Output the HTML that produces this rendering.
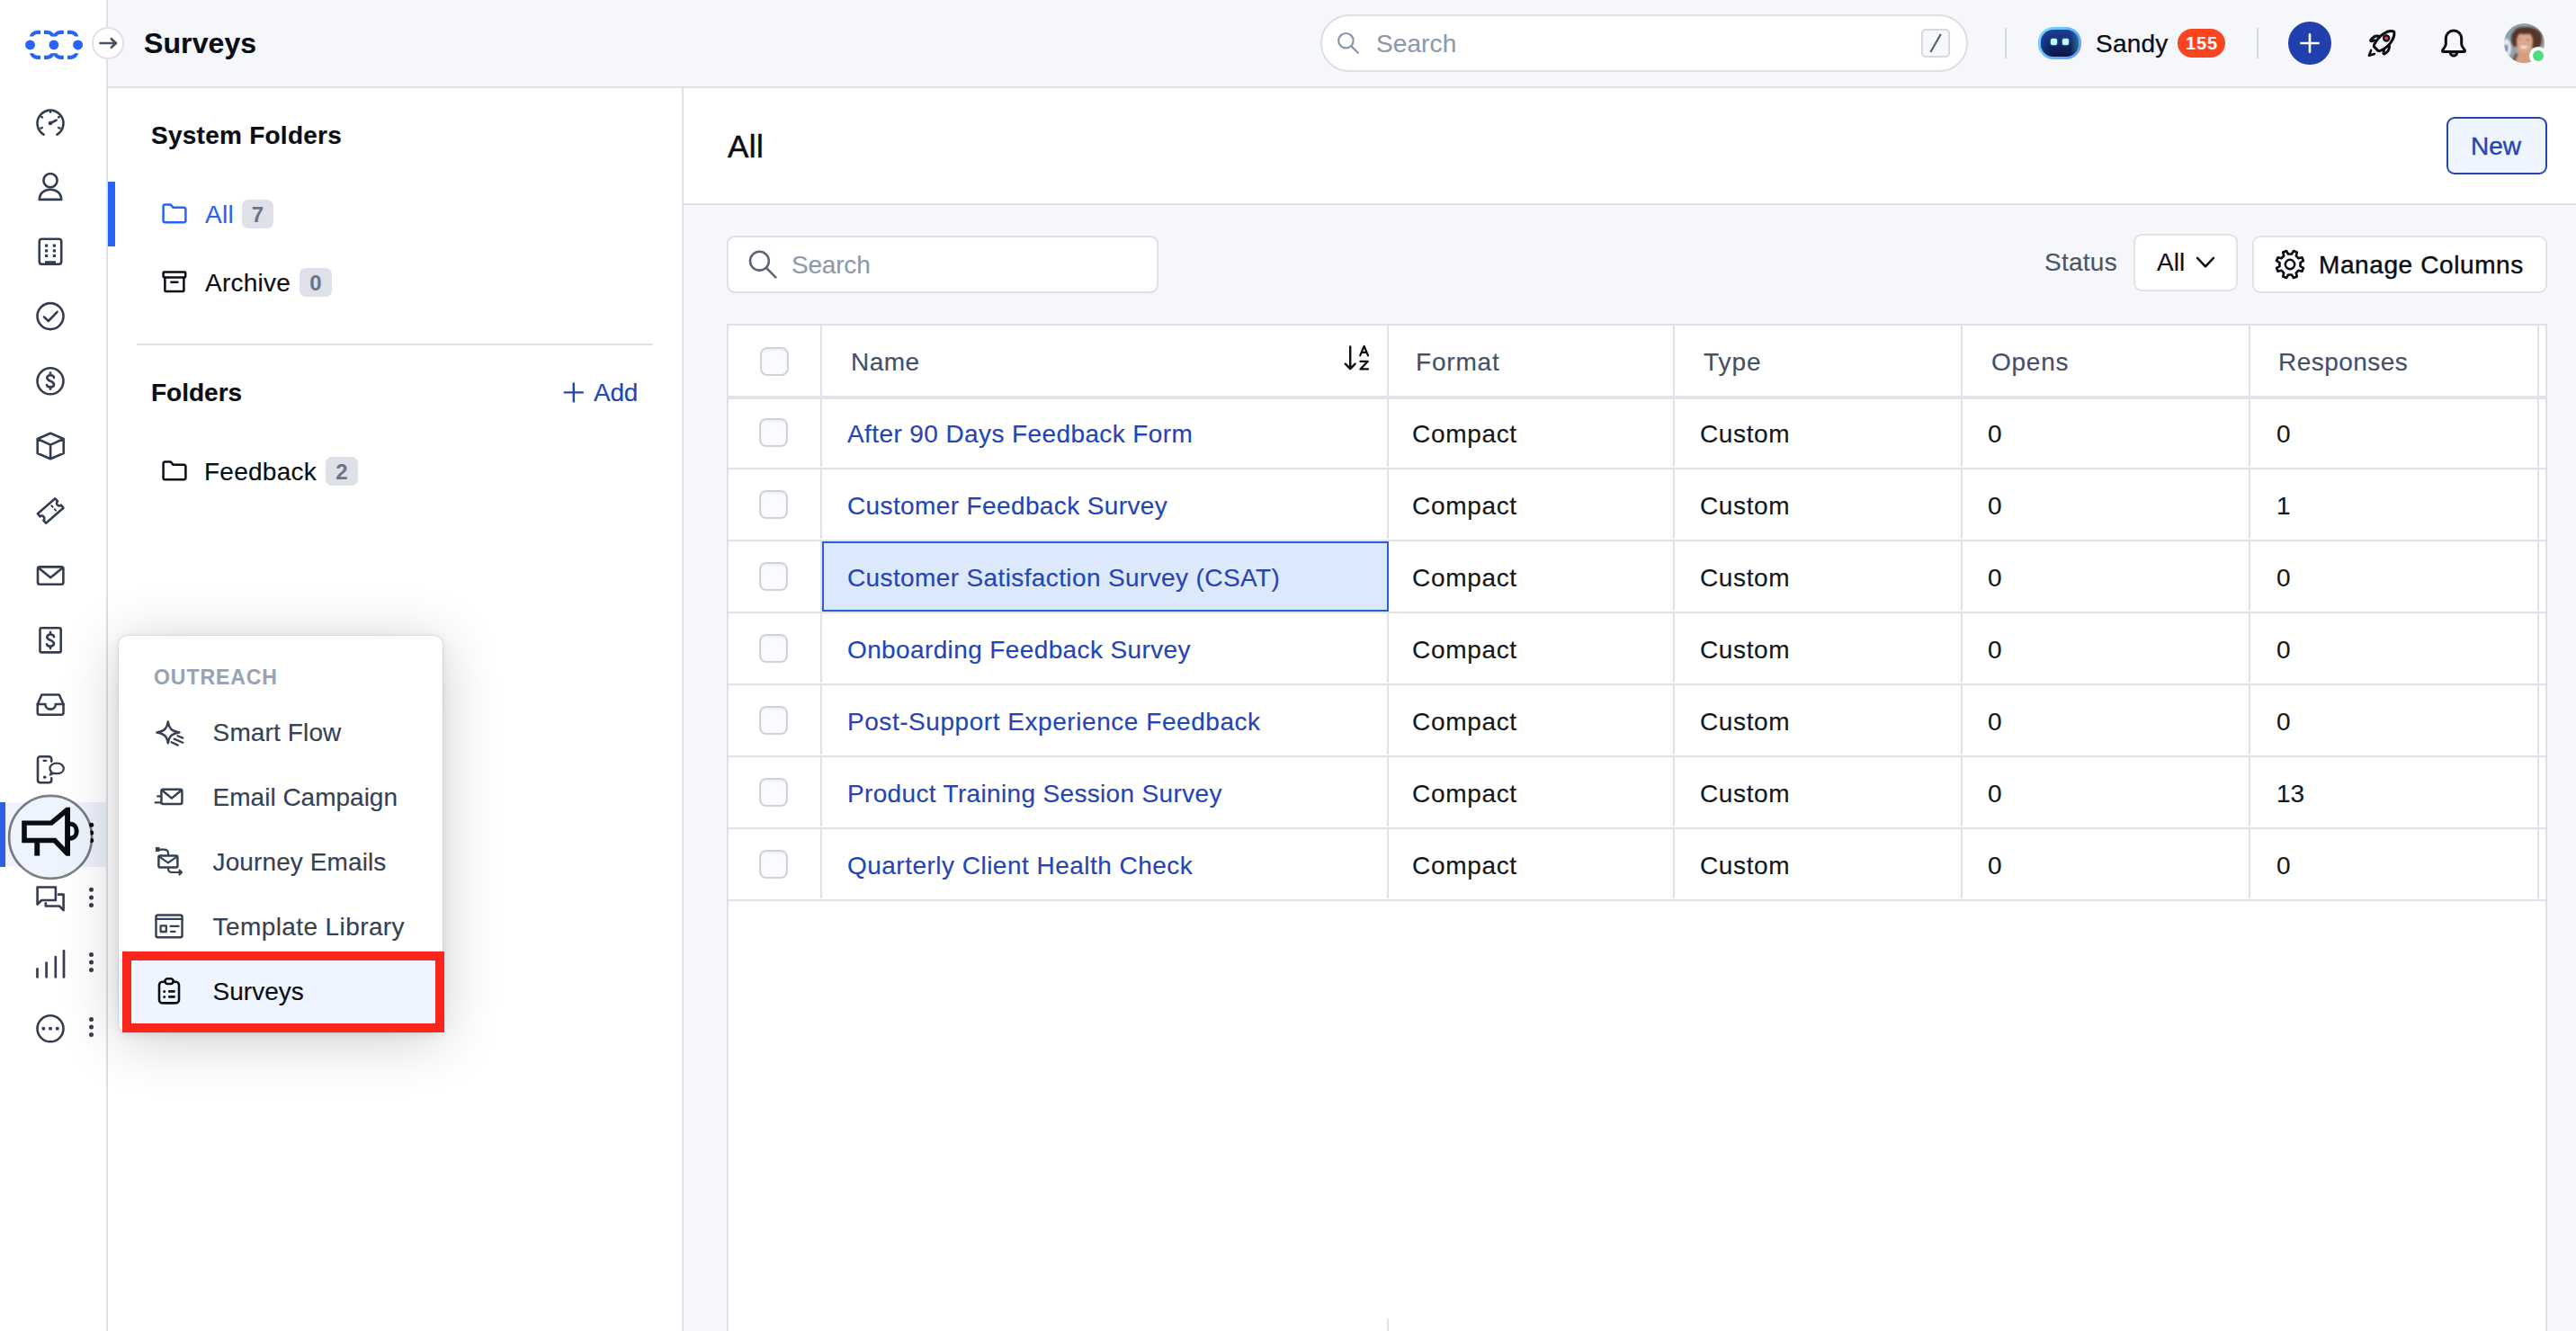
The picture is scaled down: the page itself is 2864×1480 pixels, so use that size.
<!DOCTYPE html>
<html>
<head>
<meta charset="utf-8">
<title>Surveys</title>
<style>
*{box-sizing:border-box;margin:0;padding:0}
html,body{width:2864px;height:1480px;overflow:hidden;background:#fff}
body{font-family:"Liberation Sans",sans-serif;font-size:28px;color:#0b0d14;position:relative}
.abs{position:absolute}
.t{position:absolute;white-space:nowrap;line-height:32px;font-size:28px;-webkit-text-stroke:0.14px currentColor}
.b{font-weight:bold}
svg{position:absolute;overflow:visible}
/* regions */
#topbar{left:120px;top:0;width:2744px;height:96px;background:#f6f7fb}
#topline{left:120px;top:96px;width:2744px;height:2px;background:#dcdfe6}
#railline{left:118px;top:0;width:2px;height:1480px;background:#dcdfe6}
#panelline{left:758px;top:98px;width:2px;height:1382px;background:#dcdfe6}
#content{left:760px;top:228px;width:2104px;height:1252px;background:#f6f7fb}
#headline{left:760px;top:226px;width:2104px;height:2px;background:#dcdfe6}
.badge{position:absolute;background:#dfe1e8;border-radius:7px;color:#6b7385;font-weight:bold;font-size:24px;line-height:34px;text-align:center;height:32px}
.navic{stroke:#333d4f;stroke-width:2.6;fill:none;stroke-linecap:round;stroke-linejoin:round}
.kebab{position:absolute;left:99px;width:6px;height:6px;border-radius:50%;background:#333d4f}
/* table */
#tbl{left:808px;top:360px;width:2024px;height:1130px;background:#fff;border:2px solid #dcdfe6}
.hl{position:absolute;left:810px;width:2020px;height:2px;background:#dfe2e8}
.vl{position:absolute;top:362px;width:2px;height:640px;background:#dfe2e8}
.cb{position:absolute;left:844px;width:32px;height:32px;border:2px solid #ced3dc;border-radius:8px;background:#fafbfd;box-shadow:inset 0 2px 3px rgba(60,70,100,.06)}
.lnk{color:#2645b4}
.hd{color:#465064}
.cell{color:#15171c}
.pi{color:#364153}
</style>
</head>
<body>
<!-- ===== structure ===== -->
<div class="abs" id="topbar"></div>
<div class="abs" id="topline"></div>
<div class="abs" id="content"></div>
<div class="abs" id="headline"></div>
<div class="abs" id="panelline"></div>
<div class="abs" id="railline"></div>

<!-- ===== top bar ===== -->
<div class="t b" style="left:160px;top:30px;font-size:32px;line-height:36px;letter-spacing:0.1px">Surveys</div>
<div class="abs" style="left:1468px;top:16px;width:720px;height:64px;border:2px solid #dcdfe6;border-radius:32px;background:#fff"></div>
<svg width="30" height="30" viewBox="0 0 30 30" style="left:1484px;top:33px"><circle cx="12.4" cy="12.2" r="8.2" fill="none" stroke="#8a96a8" stroke-width="2.2"/><path d="M18.4 18.4 L25.8 25.8" stroke="#8a96a8" stroke-width="2.2" stroke-linecap="round"/></svg>
<div class="t" style="left:1530px;top:33px;color:#8d99ab;letter-spacing:0.1px">Search</div>
<div class="abs" style="left:2136px;top:32px;width:32px;height:32px;border:2px solid #d5d9e0;border-radius:5px;background:#f7f8fb"></div>
<svg width="32" height="32" viewBox="0 0 32 32" style="left:2136px;top:32px"><path d="M10.8 25.2 L21.4 6.6" stroke="#5b6577" stroke-width="2.2" stroke-linecap="round"/></svg>
<div class="abs" style="left:2229px;top:31px;width:2px;height:34px;background:#d3d7de"></div>
<!-- robot -->
<div class="abs" style="left:2266px;top:30px;width:48px;height:36px;border-radius:17px;background:linear-gradient(135deg,#7bdcff 0%,#62b6ff 50%,#6a94f6 100%)"></div>
<div class="abs" style="left:2269px;top:33px;width:42px;height:30px;border-radius:14px;background:linear-gradient(180deg,#1f3f96 0%,#142a6e 45%,#0a1744 100%)"></div>
<div class="abs" style="left:2269px;top:33px;width:42px;height:30px;border-radius:14px;background:linear-gradient(90deg,rgba(30,90,220,.35) 0%,rgba(0,0,0,0) 25%,rgba(0,0,0,0) 78%,rgba(60,170,170,.55) 100%)"></div>
<div class="abs" style="left:2280px;top:42.5px;width:7px;height:7px;border-radius:2px;background:#c2fcff;box-shadow:0 0 2px #8ef"></div>
<div class="abs" style="left:2293px;top:42.5px;width:7px;height:7px;border-radius:2px;background:#c2fcff;box-shadow:0 0 2px #8ef"></div>
<div class="t" style="left:2330px;top:33px;letter-spacing:0.2px;-webkit-text-stroke:0.25px #0b0d14">Sandy</div>
<div class="abs b" style="left:2421px;top:32px;width:53px;height:32px;border-radius:16px;background:#fb4521;color:#fff;font-size:20px;line-height:32px;text-align:center;letter-spacing:0.8px;padding-left:1px">155</div>
<div class="abs" style="left:2509px;top:31px;width:2px;height:34px;background:#d3d7de"></div>
<!-- plus -->
<div class="abs" style="left:2544px;top:24px;width:48px;height:48px;border-radius:50%;background:#2140ae"></div>
<svg width="48" height="48" viewBox="0 0 48 48" style="left:2544px;top:24px"><path d="M14.3 24 H33.7 M24 14.3 V33.7" stroke="#fff" stroke-width="2.6" stroke-linecap="round"/></svg>
<!-- rocket -->
<svg width="40" height="40" viewBox="0 0 40 40" style="left:2628px;top:28px">
<g fill="none" stroke="#0a0c12" stroke-width="3" stroke-linecap="round" stroke-linejoin="round">
<path d="M32.6 6.7 Q33.8 6.8 33.9 8 C34.6 15.6 27 25 18 28.6 Q16.6 29.1 15.6 28.1 L11.9 24.4 Q10.9 23.4 11.5 22 C16.6 11 26.6 5.2 32.6 6.7 Z"/>
<path d="M17.8 12.4 C14 11.2 10.4 12.6 7.8 16.4 C7.3 17.3 8 17.9 8.8 17.7 L12 16.9"/>
<path d="M28.4 21.8 C29.2 26.4 26.6 30.2 23 31.8 C22.2 32.1 21.7 31.6 21.9 30.8 L22.5 27.8"/>
<path d="M8.2 28 L5.9 33.8 L11.8 31.9" stroke-width="2.6"/>
</g>
<circle cx="25.15" cy="14.55" r="3.1" fill="#f0384a" stroke="#0a0c12" stroke-width="2.2"/>
</svg>
<!-- bell -->
<svg width="40" height="40" viewBox="0 0 40 40" style="left:2708px;top:28px">
<path d="M16.2 30.4 A3.8 3.8 0 0 0 23.8 30.4 Z" fill="#f5a524"/><path d="M16.2 30.4 A3.8 3.8 0 0 0 23.8 30.4" fill="none" stroke="#0a0c12" stroke-width="2.7"/>
<path d="M11.3 21 V14.7 A8.7 8.7 0 0 1 28.7 14.7 V21 C28.7 22.6 29.6 23.6 30.2 24.6 L32.4 28 Q32.8 29.4 31.4 29.4 H8.6 Q7.2 29.4 7.6 28 L9.8 24.6 C10.4 23.6 11.3 22.6 11.3 21 Z" fill="#f6f7fb" stroke="#0a0c12" stroke-width="3" stroke-linejoin="round"/>
</svg>
<!-- avatar -->
<div class="abs" style="left:2784px;top:26px;width:45px;height:44px;border-radius:50%;overflow:hidden;background:linear-gradient(100deg,#8a9eb0 0%,#93a7a9 50%,#9dafa5 100%)">
<div class="abs" style="left:0;top:0;width:45px;height:44px;filter:blur(.9px)">
 <div class="abs" style="left:-4px;top:17px;width:12px;height:21px;border-radius:50%;background:#e6e8ee"></div>
 <div class="abs" style="left:.5px;top:24px;width:3px;height:7px;background:#707a98"></div>
 <div class="abs" style="left:8px;top:3.5px;width:33.5px;height:23px;border-radius:50%;background:#553628"></div>
 <div class="abs" style="left:28px;top:11px;width:13.5px;height:17px;border-radius:50%;background:#553628"></div>
 <div class="abs" style="left:8px;top:12px;width:9px;height:14px;border-radius:50%;background:#553628"></div>
 <div class="abs" style="left:26px;top:37px;width:20px;height:12px;background:#bebbb5;transform:rotate(-18deg)"></div>
 <div class="abs" style="left:12px;top:28px;width:19px;height:20px;border-radius:40% 40% 0 0;background:#d69d80"></div>
 <div class="abs" style="left:10.5px;top:33px;width:2.6px;height:9px;background:#5a524e;transform:rotate(22deg)"></div>
 <div class="abs" style="left:13.5px;top:9px;width:18.5px;height:24px;border-radius:46% 46% 50% 50%;background:#dea78d"></div>
 <div class="abs" style="left:12px;top:4px;width:22px;height:7.6px;border-radius:50%;background:#553628"></div>
 <div class="abs" style="left:16.6px;top:16.8px;width:2.8px;height:1.4px;border-radius:50%;background:#5a3d35"></div>
 <div class="abs" style="left:25.4px;top:17.6px;width:2.8px;height:1.4px;border-radius:50%;background:#5a3d35"></div>
 <div class="abs" style="left:18px;top:24.8px;width:8.2px;height:3px;border-radius:1px 1px 5px 5px;background:#f3e4df"></div>
</div>
</div>
<div class="abs" style="left:2812px;top:52px;width:20px;height:20px;border-radius:50%;background:#fff"></div>
<div class="abs" style="left:2816px;top:56px;width:12px;height:12px;border-radius:50%;background:#4fdc82"></div>


<!-- ===== left panel ===== -->
<div class="t b" style="left:168px;top:135px;letter-spacing:0.25px">System Folders</div>
<div class="abs" style="left:120px;top:202px;width:8px;height:72px;background:#2962f6"></div>
<div class="t" style="left:228px;top:223px;color:#2962f6;letter-spacing:0.3px">All</div>
<div class="badge" style="left:269px;top:222px;width:35px">7</div>
<div class="t" style="left:228px;top:299px;letter-spacing:0.25px">Archive</div>
<div class="badge" style="left:333px;top:298px;width:36px">0</div>
<div class="abs" style="left:152px;top:382px;width:574px;height:2px;background:#dcdfe6"></div>
<div class="t b" style="left:168px;top:421px">Folders</div>
<div class="t" style="left:660px;top:421px;color:#2645b4;letter-spacing:-0.3px">Add</div>
<div class="t" style="left:227px;top:509px;letter-spacing:0.25px">Feedback</div>
<div class="badge" style="left:362px;top:508px;width:36px">2</div>
<svg width="32" height="32" viewBox="0 0 32 32" style="left:178px;top:222px"><path d="M3.6 7.2 a1.8 1.8 0 0 1 1.8 -1.8 H11.6 L14.6 8.8 H26.6 a1.8 1.8 0 0 1 1.8 1.8 V23.4 a1.8 1.8 0 0 1 -1.8 1.8 H5.4 a1.8 1.8 0 0 1 -1.8 -1.8 Z" fill="none" stroke="#2962f6" stroke-width="2.5" stroke-linejoin="round"/></svg>
<svg width="32" height="32" viewBox="0 0 32 32" style="left:178px;top:298px"><g fill="none" stroke="#0b0d14" stroke-width="2.5" stroke-linejoin="round" stroke-linecap="round"><rect x="3.6" y="4.4" width="24.6" height="6" rx=".8"/><path d="M5.4 10.6 V25 a1 1 0 0 0 1 1 H25.4 a1 1 0 0 0 1 -1 V10.6"/><path d="M12.4 15.8 H19.4"/></g></svg>
<svg width="32" height="32" viewBox="0 0 32 32" style="left:178px;top:508px"><path d="M3.6 7.2 a1.8 1.8 0 0 1 1.8 -1.8 H11.6 L14.6 8.8 H26.6 a1.8 1.8 0 0 1 1.8 1.8 V23.4 a1.8 1.8 0 0 1 -1.8 1.8 H5.4 a1.8 1.8 0 0 1 -1.8 -1.8 Z" fill="none" stroke="#0b0d14" stroke-width="2.5" stroke-linejoin="round"/></svg>
<svg width="24" height="24" viewBox="0 0 24 24" style="left:626px;top:425px"><path d="M1.8 11.4 H21.8 M11.8 1.4 V21.4" stroke="#2645b4" stroke-width="2.4" stroke-linecap="round"/></svg>


<!-- ===== main header ===== -->
<div class="t" style="left:809px;top:143px;font-size:35px;line-height:40px;letter-spacing:0.5px;-webkit-text-stroke:0.5px #0b0d14">All</div>
<div class="abs" style="left:2720px;top:130px;width:112px;height:64px;border:2px solid #2645b4;border-radius:9px;background:#eff5ff"></div>
<div class="t lnk" style="left:2747px;top:147px;-webkit-text-stroke:0.4px #2645b4">New</div>

<!-- ===== filter row ===== -->
<div class="abs" style="left:808px;top:262px;width:480px;height:64px;border:2px solid #dcdfe6;border-radius:9px;background:#fff"></div>
<div class="t" style="left:880px;top:279px;color:#8d99ab;letter-spacing:-0.2px">Search</div>
<div class="t" style="left:2273px;top:276px;color:#4b5565;letter-spacing:0.25px">Status</div>
<div class="abs" style="left:2372px;top:260px;width:116px;height:64px;border:2px solid #dfe2e8;border-radius:9px;background:#fff"></div>
<div class="t" style="left:2398px;top:276px">All</div>
<div class="abs" style="left:2504px;top:262px;width:328px;height:64px;border:2px solid #dfe2e8;border-radius:9px;background:#fff"></div>
<div class="t" style="left:2578px;top:279px;letter-spacing:0.6px;-webkit-text-stroke:0.4px #0b0d14">Manage Columns</div>
<svg width="36" height="36" viewBox="0 0 36 36" style="left:830px;top:276px"><circle cx="14.4" cy="14.2" r="10.4" fill="none" stroke="#5b6577" stroke-width="2.6"/><path d="M22.2 22.2 L32.4 32.4" stroke="#5b6577" stroke-width="2.6" stroke-linecap="round"/></svg>
<svg width="24" height="16" viewBox="0 0 24 16" style="left:2440px;top:284px"><path d="M3 2.8 L12 12.4 L21 2.8" fill="none" stroke="#0b0d14" stroke-width="2.5" stroke-linecap="round" stroke-linejoin="round"/></svg>
<!-- gear -->
<svg width="36" height="36" viewBox="-18 -18 36 36" style="left:2528px;top:276px">
<g fill="none" stroke="#0b0d14" stroke-width="2.5" stroke-linejoin="round">
<path d="M10.71 -2.51 L14.48 -1.89 L14.48 1.89 L10.71 2.51 L9.35 5.80 L11.57 8.90 L8.90 11.57 L5.80 9.35 L2.51 10.71 L1.89 14.48 L-1.89 14.48 L-2.51 10.71 L-5.80 9.35 L-8.90 11.57 L-11.57 8.90 L-9.35 5.80 L-10.71 2.51 L-14.48 1.89 L-14.48 -1.89 L-10.71 -2.51 L-9.35 -5.80 L-11.57 -8.90 L-8.90 -11.57 L-5.80 -9.35 L-2.51 -10.71 L-1.89 -14.48 L1.89 -14.48 L2.51 -10.71 L5.80 -9.35 L8.90 -11.57 L11.57 -8.90 L9.35 -5.80 Z" transform="rotate(22.5) scale(1.06)"/>
<circle cx="0" cy="0" r="5.2"/>
</g></svg>


<!-- ===== table ===== -->
<div class="abs" id="tbl"></div>
<div class="vl" style="left:912px"></div>
<div class="vl" style="left:1542px"></div>
<div class="vl" style="left:1860px"></div>
<div class="vl" style="left:2180px"></div>
<div class="vl" style="left:2500px"></div>
<div class="vl" style="left:2821px"></div>
<div class="hl" style="top:440px;height:4px;background:#e1e3ea"></div>
<div class="hl" style="top:520px;box-shadow:0 -1px 0 #fff"></div>
<div class="hl" style="top:600px;box-shadow:0 -1px 0 #fff"></div>
<div class="hl" style="top:680px;box-shadow:0 -1px 0 #fff"></div>
<div class="hl" style="top:760px;box-shadow:0 -1px 0 #fff"></div>
<div class="hl" style="top:840px;box-shadow:0 -1px 0 #fff"></div>
<div class="hl" style="top:920px;box-shadow:0 -1px 0 #fff"></div>
<div class="hl" style="top:1000px;box-shadow:0 -1px 0 #fff"></div>
<div class="abs" style="left:914px;top:602px;width:630px;height:78px;border:2px solid #2b5fd9;background:#dce9fd"></div>
<div class="cb" style="top:386px;left:845px"></div>
<div class="t hd" style="left:946px;top:387px;letter-spacing:0.5px">Name</div>
<div class="t hd" style="left:1574px;top:387px;letter-spacing:0.8px">Format</div>
<div class="t hd" style="left:1894px;top:387px;letter-spacing:0.95px">Type</div>
<div class="t hd" style="left:2214px;top:387px;letter-spacing:0.75px">Opens</div>
<div class="t hd" style="left:2533px;top:387px;letter-spacing:0.45px">Responses</div>
<div class="cb" style="top:465px"></div>
<div class="t lnk" style="left:942px;top:467px;letter-spacing:0.4px">After 90 Days Feedback Form</div>
<div class="t cell" style="left:1570px;top:467px;letter-spacing:0.68px">Compact</div>
<div class="t cell" style="left:1890px;top:467px;letter-spacing:0.62px">Custom</div>
<div class="t cell" style="left:2210px;top:467px">0</div>
<div class="t cell" style="left:2531px;top:467px">0</div>
<div class="cb" style="top:545px"></div>
<div class="t lnk" style="left:942px;top:547px;letter-spacing:0.38px">Customer Feedback Survey</div>
<div class="t cell" style="left:1570px;top:547px;letter-spacing:0.68px">Compact</div>
<div class="t cell" style="left:1890px;top:547px;letter-spacing:0.62px">Custom</div>
<div class="t cell" style="left:2210px;top:547px">0</div>
<div class="t cell" style="left:2531px;top:547px">1</div>
<div class="cb" style="top:625px"></div>
<div class="t lnk" style="left:942px;top:627px;letter-spacing:0.38px">Customer Satisfaction Survey (CSAT)</div>
<div class="t cell" style="left:1570px;top:627px;letter-spacing:0.68px">Compact</div>
<div class="t cell" style="left:1890px;top:627px;letter-spacing:0.62px">Custom</div>
<div class="t cell" style="left:2210px;top:627px">0</div>
<div class="t cell" style="left:2531px;top:627px">0</div>
<div class="cb" style="top:705px"></div>
<div class="t lnk" style="left:942px;top:707px;letter-spacing:0.38px">Onboarding Feedback Survey</div>
<div class="t cell" style="left:1570px;top:707px;letter-spacing:0.68px">Compact</div>
<div class="t cell" style="left:1890px;top:707px;letter-spacing:0.62px">Custom</div>
<div class="t cell" style="left:2210px;top:707px">0</div>
<div class="t cell" style="left:2531px;top:707px">0</div>
<div class="cb" style="top:785px"></div>
<div class="t lnk" style="left:942px;top:787px;letter-spacing:0.55px">Post-Support Experience Feedback</div>
<div class="t cell" style="left:1570px;top:787px;letter-spacing:0.68px">Compact</div>
<div class="t cell" style="left:1890px;top:787px;letter-spacing:0.62px">Custom</div>
<div class="t cell" style="left:2210px;top:787px">0</div>
<div class="t cell" style="left:2531px;top:787px">0</div>
<div class="cb" style="top:865px"></div>
<div class="t lnk" style="left:942px;top:867px;letter-spacing:0.34px">Product Training Session Survey</div>
<div class="t cell" style="left:1570px;top:867px;letter-spacing:0.68px">Compact</div>
<div class="t cell" style="left:1890px;top:867px;letter-spacing:0.62px">Custom</div>
<div class="t cell" style="left:2210px;top:867px">0</div>
<div class="t cell" style="left:2531px;top:867px">13</div>
<div class="cb" style="top:945px"></div>
<div class="t lnk" style="left:942px;top:947px;letter-spacing:0.48px">Quarterly Client Health Check</div>
<div class="t cell" style="left:1570px;top:947px;letter-spacing:0.68px">Compact</div>
<div class="t cell" style="left:1890px;top:947px;letter-spacing:0.62px">Custom</div>
<div class="t cell" style="left:2210px;top:947px">0</div>
<div class="t cell" style="left:2531px;top:947px">0</div>
<div class="abs" style="left:1542px;top:1466px;width:2px;height:14px;background:#e0e0e0"></div>
<!-- sort A-Z -->
<svg width="34" height="34" viewBox="0 0 34 34" style="left:1492.6px;top:382.4px">
<path d="M8.2 3.4 V28 M2.8 22.6 L8.2 28.2 L13.6 22.6" fill="none" stroke="#0b0d14" stroke-width="2.4" stroke-linecap="round" stroke-linejoin="round"/>
<path d="M19.2 13.4 L23.6 2.8 L28 13.4 M20.8 9.8 H26.4" fill="none" stroke="#0b0d14" stroke-width="2.2" stroke-linecap="round" stroke-linejoin="round"/>
<path d="M19.4 19.8 H27.8 L19.4 28.4 H28" fill="none" stroke="#0b0d14" stroke-width="2.2" stroke-linecap="round" stroke-linejoin="round"/>
</svg>

<!-- ===== nav rail ===== -->
<div class="abs" style="left:0;top:892px;width:118px;height:72px;background:linear-gradient(90deg,#eef3fd 0%,#eef3fd 60%,#eaeffa 100%)"></div>
<div class="abs" style="left:0;top:892px;width:6px;height:72px;background:#2d5fe3"></div>
<svg width="120" height="1480" viewBox="0 0 120 1480" style="left:0;top:0">
<!-- logo -->
<defs><clipPath id="lgc">
<rect x="26" y="30" width="19" height="10.5"/><rect x="49" y="30" width="21.8" height="10.5"/><rect x="75" y="30" width="19" height="10.5"/>
<rect x="26" y="59.2" width="19" height="10.5"/><rect x="49" y="59.2" width="21.8" height="10.5"/><rect x="75" y="59.2" width="19" height="10.5"/>
</clipPath></defs>
<g fill="#2765f8">
<circle cx="33.5" cy="49.9" r="5.45"/><circle cx="59.85" cy="49.9" r="5.35"/><circle cx="86.6" cy="49.9" r="5.5"/>
</g>
<g fill="none" stroke="#2765f8" stroke-width="4.2" clip-path="url(#lgc)">
<rect x="34.6" y="35.8" width="24.6" height="28" rx="6.8"/>
<rect x="60.5" y="35.8" width="25" height="28" rx="6.8"/>
</g>
<g class="navic">
<!-- 1 gauge -->
<path d="M48.6 149.6 A14.5 14.5 0 1 1 63.4 149.6"/>
<path d="M56 137 L62.6 133.6"/>
<circle cx="56" cy="137" r="1.6" fill="#333d4f" stroke-width="1.4"/>
<path d="M56 123.2V125 M45.6 129.6l1.5 .9 M66.4 129.6l-1.5 .9 M45.4 142.6l1.6-.6 M66.6 142.6l-1.6-.6" stroke-width="2.2"/>
<!-- 2 person -->
<circle cx="56" cy="200.6" r="7.6"/>
<path d="M43.8 221.9 C43.8 215.2 49 210.8 56 210.8 C63 210.8 68.2 215.2 68.2 221.9 Z"/>
<!-- 3 building -->
<rect x="43.8" y="265.7" width="24.4" height="28" rx="2.6"/>
<g fill="#333d4f" stroke="none">
<rect x="50" y="271.6" width="3.2" height="3.2" rx=".6"/><rect x="58.8" y="271.6" width="3.2" height="3.2" rx=".6"/>
<rect x="50" y="277.2" width="3.2" height="3.2" rx=".6"/><rect x="58.8" y="277.2" width="3.2" height="3.2" rx=".6"/>
<rect x="50" y="282.8" width="3.2" height="3.2" rx=".6"/><rect x="58.8" y="282.8" width="3.2" height="3.2" rx=".6"/>
<rect x="50" y="290.2" width="12" height="3.6"/>
</g>
<!-- 4 check circle -->
<circle cx="56" cy="351.6" r="14.5"/>
<path d="M49 352.4 L53.8 357 L63.6 346.8"/>
<!-- 5 dollar circle -->
<circle cx="56" cy="423.8" r="14.5"/>
<path d="M60 420 C60 416.2 52.3 416.4 52.3 420.2 C52.3 424 60 423.4 60 427.4 C60 431.2 52.6 431.4 52 428 M56 414.6V416.6 M56 430.8V432.8" stroke-width="2.6"/>
<!-- 6 cube -->
<path d="M56.1 481.7 L70.7 488 V504 L56.1 510.3 L41.7 504 V488 Z M41.7 488 L56.1 494.6 L70.7 488 M56.1 494.6 V510.3"/>
<!-- 7 ticket -->
<g transform="translate(56.2 568) rotate(-41)">
<path d="M-12.9 -7 H12.9 V-2.9 A2.9 2.9 0 0 0 12.9 2.9 V7 H-12.9 V2.9 A2.9 2.9 0 0 0 -12.9 -2.9 Z"/>
<path d="M4.6 -3.6 V-1.6 M4.6 1.6 V3.6" stroke-width="2"/>
</g>
<!-- 8 mail -->
<rect x="42" y="630.4" width="28.4" height="19.4" rx="2.2"/>
<path d="M42.6 631.2 L56.2 642.2 L69.8 631.2"/>
<!-- 9 dollar rect -->
<rect x="44.5" y="698.2" width="23.2" height="27.2" rx="1.6"/>
<path d="M60 708.2 C60 704.4 52.3 704.6 52.3 708.4 C52.3 712.2 60 711.6 60 715.6 C60 719.4 52.6 719.6 52 716.2 M56 702.8V704.8 M56 719V721" stroke-width="2.6"/>
<!-- 10 inbox -->
<path d="M46.4 772.5 H65.8 L70.5 783 V792.6 a2.2 2.2 0 0 1 -2.2 2.2 H44 a2.2 2.2 0 0 1 -2.2 -2.2 V783 Z"/>
<path d="M41.8 783 H50.4 C50.4 786.4 52.8 788.6 56.1 788.6 S61.8 786.4 61.8 783 H70.5"/>
<!-- 11 phone + bubble -->
<path d="M57.2 846.6 V843.9 a2.6 2.6 0 0 0 -2.6 -2.6 H44.6 a2.6 2.6 0 0 0 -2.6 2.6 V867.6 a2.6 2.6 0 0 0 2.6 2.6 H54.6 a2.6 2.6 0 0 0 2.6 -2.6 V865.4"/>
<path d="M48.6 845.8 H51.2" stroke-width="2.2"/>
<circle cx="49.7" cy="864.2" r="1.3" fill="#333d4f" stroke-width="1"/>
<path d="M63.2 848.6 C67.8 848.6 70.8 851.2 70.8 854.4 C70.8 857.8 67.6 860.2 63.2 860.2 C61.8 860.2 60.6 860 59.6 859.6 L56 861.6 L57.2 858.2 C56 857.2 55.4 855.8 55.4 854.4 C55.4 851.2 58.6 848.6 63.2 848.6 Z" stroke-width="2.3"/>
<!-- 13 chat bubbles -->
<path d="M41.6 986.5 H61.9 V1001 H46.2 L41.6 1005.6 Z"/>
<path d="M65 994.6 H70.6 V1012.2 L66 1007.5 H50.8 V1004.2"/>
<!-- 14 bars -->
<path d="M41.5 1077.4 V1086.4 M51.6 1070.6 V1086.4 M61.8 1064 V1086.4 M71 1057.4 V1086.4" stroke-width="2.7"/>
<!-- 15 more circle -->
<circle cx="56" cy="1143.8" r="14.5"/>
<g fill="#333d4f" stroke="none"><circle cx="48.4" cy="1143.8" r="2"/><circle cx="56" cy="1143.8" r="2"/><circle cx="63.7" cy="1143.8" r="2"/></g>
</g>
<!-- kebabs -->
<g fill="#000"><circle cx="101.7" cy="917.3" r="2.5"/><circle cx="101.7" cy="925.9" r="2.5"/><circle cx="101.7" cy="934.4" r="2.5"/></g>
<g fill="#333d4f">
<circle cx="101.5" cy="989.2" r="2.5"/><circle cx="101.5" cy="997.9" r="2.5"/><circle cx="101.5" cy="1006.5" r="2.5"/>
<circle cx="101.5" cy="1061.4" r="2.5"/><circle cx="101.5" cy="1070" r="2.5"/><circle cx="101.5" cy="1078.5" r="2.5"/>
<circle cx="101.5" cy="1133.4" r="2.5"/><circle cx="101.5" cy="1142" r="2.5"/><circle cx="101.5" cy="1150.6" r="2.5"/>
</g>
<!-- 12 megaphone in circle -->
<circle cx="56.1" cy="930.9" r="44.8" fill="#eef4fe"/><circle cx="56.1" cy="930.9" r="45.95" fill="none" stroke="rgba(0,0,0,.5)" stroke-width="2.7"/>
<path fill="#0a0c12" fill-rule="evenodd" d="M24.2 912.4 H55.9 L73.5 897.8 H78 V951.8 H73.5 L59.5 937.2 H24.2 Z M29.8 917.8 H58.2 L72.1 906.3 V942.2 L62.1 931.8 H29.8 Z"/>
<rect x="38.3" y="937" width="5.9" height="14.6" fill="#0a0c12"/>
<path d="M78 916.3 C87.6 916.3 87.6 932.2 78 932.2" fill="none" stroke="#0a0c12" stroke-width="5"/>
</svg>
<!-- collapse arrow button -->
<div class="abs" style="left:102px;top:30px;width:36px;height:36px;border-radius:50%;background:#fff;border:2px solid #dfe1e7"></div>
<svg width="36" height="36" viewBox="0 0 36 36" style="left:102px;top:30px"><path d="M9.6 18 H26.4 M21.8 13.2 L27 18 L21.8 22.8" fill="none" stroke="#4a5263" stroke-width="2.7" stroke-linecap="round" stroke-linejoin="round"/></svg>


<!-- ===== popup ===== -->
<div class="abs" style="left:132px;top:707px;width:360px;height:441px;background:#fff;border-radius:10px;box-shadow:0 0 0 1px rgba(0,0,0,.05),0 8px 64px rgba(0,0,0,.2),0 2px 10px rgba(0,0,0,.09)"></div>
<div class="t b" style="left:171px;top:737px;font-size:23px;line-height:32px;color:#9aa3b5;letter-spacing:0.95px">OUTREACH</div>
<div class="abs" style="left:132px;top:1066px;width:6px;height:76px;background:#eff5ff;border-radius:0 0 0 8px"></div>
<div class="abs" style="left:136px;top:1058px;width:358px;height:90px;background:#eff5ff;border:10px solid #f9261c"></div>
<div class="t pi" style="left:236.6px;top:799px;letter-spacing:0.13px">Smart Flow</div>
<div class="t pi" style="left:236.6px;top:871px">Email Campaign</div>
<div class="t pi" style="left:236.6px;top:943px;letter-spacing:0.1px">Journey Emails</div>
<div class="t pi" style="left:236.6px;top:1015px;letter-spacing:0.4px">Template Library</div>
<div class="t" style="left:236.6px;top:1087px">Surveys</div>
<svg width="360" height="441" viewBox="132 707 360 441" style="left:132px;top:707px">
<g fill="none" stroke="#364153" stroke-width="2.5" stroke-linecap="round" stroke-linejoin="round">
<!-- smart flow sparkle -->
<path d="M186.8 802.4 C188.2 810.6 191 813.2 199.4 814.4 C191 815.8 188.2 818.4 186.8 826.2 C185.4 818.4 182.6 815.8 174.4 814.4 C182.6 813.2 185.4 810.6 186.8 802.4 Z"/>
<path d="M197.6 818.2 L203.2 820.6 M193.6 821.6 L203.2 825.8 M190.6 825.2 L197.8 828.6" stroke-width="2.3"/>
<!-- email campaign -->
<rect x="179.4" y="877.8" width="23" height="16.2" rx="2"/>
<path d="M180.2 878.8 L190.9 887.6 L201.6 878.8"/>
<path d="M175.2 885.4 H179 M172.6 892.4 H179" stroke-width="2.2"/>
<!-- journey emails -->
<rect x="176.4" y="951.6" width="21" height="12.8" rx="1.6"/>
<path d="M177.2 952.6 L186.9 959.4 L196.6 952.6" stroke-width="2.2"/>
<rect x="173.6" y="942.8" width="3.2" height="3.6" fill="#364153" stroke-width="1.4"/>
<path d="M177 944.6 H182.4 Q187 944.6 187 949 V951" stroke-width="2.2"/>
<path d="M187 965 V966 Q187 970 191.4 970 H200" stroke-width="2.2"/>
<path d="M199.4 967.2 L202.4 970 L199.4 972.8 Z" fill="#364153" stroke-width="1.6"/>
<!-- template library -->
<rect x="173.5" y="1017.5" width="29" height="24.8" rx="2"/>
<path d="M173.5 1021.9 H202.5" stroke-width="2.3"/>
<rect x="178.6" y="1029.4" width="6.2" height="6.6" stroke-width="2.3"/>
<path d="M189.6 1029.8 H198.6 M190 1035.8 H194.6" stroke-width="2.3"/>
</g>
<!-- surveys clipboard -->
<g fill="none" stroke="#0b0d14" stroke-width="2.6" stroke-linecap="round" stroke-linejoin="round">
<path d="M183.6 1091.8 H180.6 a3.6 3.6 0 0 0 -3.6 3.6 V1111.8 a3.6 3.6 0 0 0 3.6 3.6 H195.4 a3.6 3.6 0 0 0 3.6 -3.6 V1095.4 a3.6 3.6 0 0 0 -3.6 -3.6 H192.6"/>
<rect x="183.4" y="1088.2" width="9.4" height="5.8" rx="2.9"/>
<path d="M188.2 1102.4 H193.6 M188.2 1108.4 H193.6"/>
<path d="M182.7 1102.4 h.01 M182.7 1108.4 h.01" stroke-width="3"/>
</g>
</svg>

</body>
</html>
